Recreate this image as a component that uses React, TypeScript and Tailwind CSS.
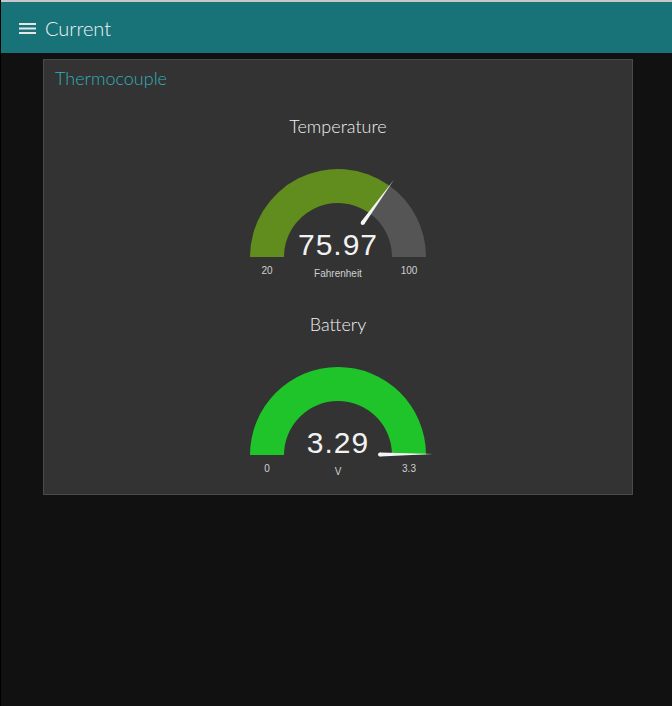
import React from "react"

type GaugeProps = {
  title: string
  value: number
  min: number
  max: number
  units: string
  color: string
  label: string
}

const CX = 100
const CY = 97
const R_OUT = 88
const R_IN = 54

function pt(r: number, a: number) {
  return [CX + r * Math.cos(a), CY - r * Math.sin(a)]
}

function sector(a0: number, a1: number) {
  // a0 > a1, angles in radians, drawn clockwise on screen
  const [x0, y0] = pt(R_OUT, a0)
  const [x1, y1] = pt(R_OUT, a1)
  const [x2, y2] = pt(R_IN, a1)
  const [x3, y3] = pt(R_IN, a0)
  return `M${x0} ${y0} A${R_OUT} ${R_OUT} 0 0 1 ${x1} ${y1} L${x2} ${y2} A${R_IN} ${R_IN} 0 0 0 ${x3} ${y3} Z`
}

function Gauge({ title, value, min, max, units, color, label }: GaugeProps) {
  const f = Math.min(1, Math.max(0, (value - min) / (max - min)))
  const a = Math.PI * (1 - f)
  const [tx, ty] = pt(95, a)
  const [bx, by] = pt(42, a)
  const px = Math.sin(a) * 2
  const py = Math.cos(a) * 2

  return (
    <div className="flex flex-col items-center">
      <div className="h-6 leading-6 text-[18px] font-light text-[#f0f0f0]">{title}</div>
      <svg width="200" height="120" viewBox="0 0 200 120" className="mt-[22px]">
        <path d={sector(a, 0)} fill="#555555" />
        <path d={sector(Math.PI, a)} fill={color} />
        <polygon
          points={`${tx},${ty} ${bx + px},${by + py} ${bx - px},${by - py}`}
          fill="#f4f4f4"
        />
        <circle cx={bx} cy={by} r="2" fill="#f4f4f4" />
        <text
          x={CX}
          y={CY - 2}
          textAnchor="middle"
          fontSize="30"
          letterSpacing="1"
          fill="#f2f2f2"
          fontFamily="'Liberation Sans', Arial, sans-serif"
        >
          {label}
        </text>
        <text x={CX - 71} y={CY + 17} textAnchor="middle" fontSize="10" fill="#d0d0d0" fontFamily="'Liberation Sans', Arial, sans-serif">
          {min}
        </text>
        <text x={CX + 71} y={CY + 17} textAnchor="middle" fontSize="10" fill="#d0d0d0" fontFamily="'Liberation Sans', Arial, sans-serif">
          {max}
        </text>
        <text x={CX} y={CY + 20} textAnchor="middle" fontSize="10" fill="#d0d0d0" fontFamily="'Liberation Sans', Arial, sans-serif">
          {units}
        </text>
      </svg>
    </div>
  )
}

export default function App() {
  return (
    <div className="min-h-[706px] bg-[#111111] border-l border-black font-['Lato',sans-serif]">
      <div className="h-[2px] bg-[#c8c8c8]" />
      <header className="h-[51px] bg-[#177378] flex items-center gap-[10px] pl-[18px]">
        <svg width="17" height="14" viewBox="0 0 17 14" className="mt-[1px]">
          <rect x="0" y="2" width="17" height="2" fill="#e6e6e6" />
          <rect x="0" y="6.5" width="17" height="2" fill="#e6e6e6" />
          <rect x="0" y="11" width="17" height="2" fill="#e6e6e6" />
        </svg>
        <span className="text-[20px] font-light text-[#f2f2f2] -ml-[1px]">Current</span>
      </header>

      <main className="pt-[6px] pl-[42px]">
        <section className="w-[590px] bg-[#333333] border border-[#4a4a4a] pb-[16px]">
          <div className="h-9 flex items-center pl-[11px] text-[18px] font-light text-[#30b0ba]">Thermocouple</div>
          <div className="mt-[18px] flex flex-col gap-[32px]">
            <Gauge title="Temperature" value={75.97} min={20} max={100} units="Fahrenheit" color="#618c1e" label="75.97" />
            <Gauge title="Battery" value={3.29} min={0} max={3.3} units="V" color="#1fc42a" label="3.29" />
          </div>
        </section>
      </main>
    </div>
  )
}
